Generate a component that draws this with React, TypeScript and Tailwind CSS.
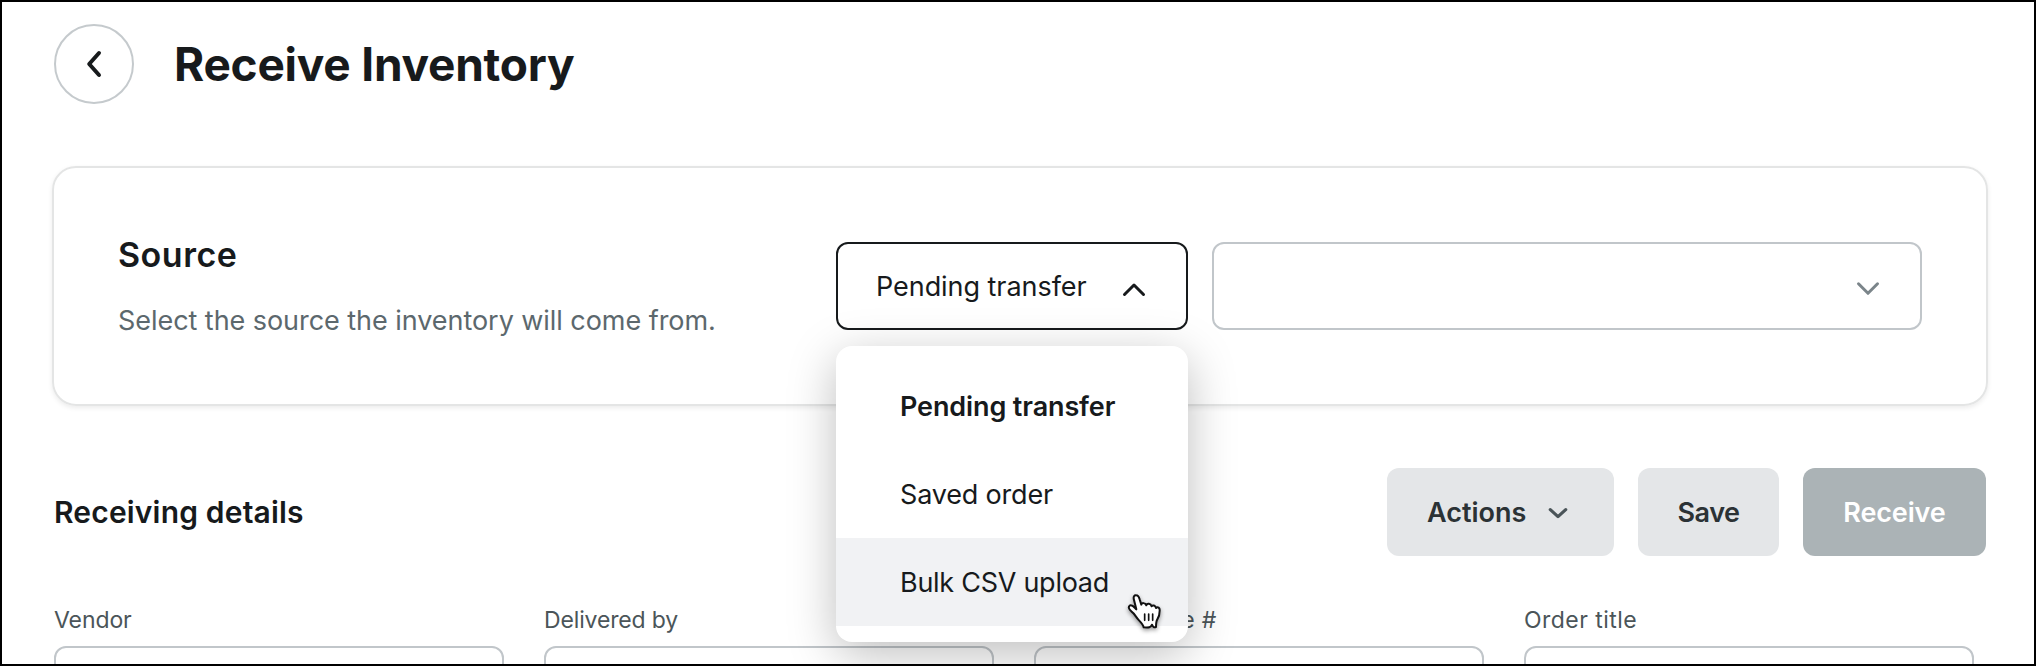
import { useState } from "react"

const sources = [
  { id: "pending", label: "Pending transfer", spacing: "tracking-[-0.12px]" },
  { id: "saved", label: "Saved order", spacing: "tracking-[-0.18px]" },
  { id: "csv", label: "Bulk CSV upload", spacing: "tracking-[-0.27px]" },
]

const fields = [
  { label: "Vendor", spacing: "tracking-[-0.1px]" },
  { label: "Delivered by", spacing: "tracking-[-0.15px]" },
  { label: "Invoice #", spacing: "pl-[81px] tracking-[0.3px]" },
  { label: "Order title", spacing: "tracking-[0.45px]" },
]

function HandCursor() {
  return (
    <svg
      className="pointer-events-none absolute left-[284px] top-[239px] h-[50px] w-[50px] overflow-visible drop-shadow-[0_2px_2px_rgba(0,0,0,0.4)]"
      viewBox="0 0 150 150"
      fill="none"
      strokeLinecap="round"
      strokeLinejoin="round"
    >
      <path
        d="M49 73 42 45C39 34 43 30 49 31C54 31 57 36 59 43L64 59C64 53 76 52 79 61C81 54 92 55 95 64C98 59 106 61 108 69C113 64 120 68 119 77C119 90 117 96 112 103C108 109 108 115 108 126C103 128 99 127 96 119C91 128 88 128 71 127C70 119 64 113 57 106C48 97 44 86 34 79C27 73 24 66 29 62C36 57 43 67 49 73Z"
        fill="#fff"
        stroke="#111"
        strokeWidth="6"
      />
      <path d="M74 87v19M86 87v19M98 87v19" stroke="#111" strokeWidth="5" />
    </svg>
  )
}

export default function App() {
  const [selected, setSelected] = useState("pending")
  const current = sources.find((s) => s.id === selected)

  return (
    <div className="h-[666px] w-[2036px] overflow-hidden border-2 border-black bg-white font-[Inter,sans-serif] text-[#171a1c]">
      {/* Header */}
      <header className="ml-[52px] mt-[22px] flex items-center">
        <button className="flex h-20 w-20 items-center justify-center rounded-full border-2 border-[#c5cacd]">
          <svg className="h-8 w-8" viewBox="0 0 32 32" fill="none" stroke="currentColor" strokeWidth="4" strokeLinecap="round" strokeLinejoin="round">
            <path d="M21 5 11.2 16 21 27" />
          </svg>
        </button>
        <h1 className="ml-10 text-[46px] font-bold tracking-[-0.23px]">Receive Inventory</h1>
      </header>

      {/* Source */}
      <section className="ml-[50px] mt-[62px] flex h-60 w-[1936px] items-center justify-between rounded-3xl border-2 border-[#e4e5e5] px-16 shadow-[0_2px_5px_rgba(0,0,0,0.08)]">
        <div className="pt-0.5">
          <h2 className="text-[34px] font-semibold leading-10 tracking-[0.5px]">Source</h2>
          <p className="mt-7 text-[27px] leading-9 tracking-[-0.05px] text-[#5c686d]">
            Select the source the inventory will come from.
          </p>
        </div>

        <div className="flex gap-6">
          <div className="relative">
            <button className="flex h-[88px] w-[352px] items-center justify-between rounded-xl border-2 border-[#171a1c] pl-[38px] pr-10 text-[27px] tracking-[-0.05px]">
              <span className="pt-0.5">{current?.label}</span>
              <svg className="h-6 w-6" viewBox="0 0 24 24" fill="none" stroke="currentColor" strokeWidth="3" strokeLinecap="round" strokeLinejoin="round">
                <path d="M2.5 20.5 12 11l9.5 9.5" />
              </svg>
            </button>

            <div className="absolute left-0 top-[104px] z-10 w-[352px] rounded-2xl bg-white py-4 shadow-[0_12px_48px_rgba(0,0,0,0.26)]">
              {sources.map((s) => (
                <button
                  key={s.id}
                  onClick={() => setSelected(s.id)}
                  className={`flex h-[88px] w-full items-center pl-16 pt-0.5 text-[27px] ${s.spacing} ${
                    s.id === selected ? "font-semibold" : ""
                  } ${s.id === "csv" ? "bg-[#f1f2f4]" : ""}`}
                >
                  {s.label}
                </button>
              ))}
              <HandCursor />
            </div>
          </div>

          <button className="flex h-[88px] w-[710px] items-center justify-end rounded-xl border-2 border-[#c1c6ca] pr-10 text-[#7b858a]">
            <svg className="h-6 w-6" viewBox="0 0 24 24" fill="none" stroke="currentColor" strokeWidth="3" strokeLinecap="round" strokeLinejoin="round">
              <path d="M2.5 9.8 12 19.3l9.5-9.5" />
            </svg>
          </button>
        </div>
      </section>

      {/* Details */}
      <div className="ml-[52px] mr-12 mt-[62px] flex h-[88px] items-center justify-between">
        <h2 className="text-[30px] font-semibold tracking-[0.17px]">Receiving details</h2>
        <div className="flex gap-6 text-[27px] font-semibold text-[#2b3235]">
          <button className="flex h-[88px] w-[227px] items-center rounded-xl bg-[#e4e6e8] pl-10">
            <span className="pt-0.5">Actions</span>
            <svg className="ml-[22px] h-5 w-5" viewBox="0 0 20 20" fill="none" stroke="#4a5458" strokeWidth="3.2" strokeLinecap="round" strokeLinejoin="round">
              <path d="M2.3 7.6 10 14.6l7.7-7" />
            </svg>
          </button>
          <button className="h-[88px] w-[141px] rounded-xl bg-[#e4e6e8] pt-0.5 tracking-[-0.49px]">Save</button>
          <button className="h-[88px] w-[183px] rounded-xl bg-[#abb3b6] pt-0.5 tracking-[-0.14px] text-white">Receive</button>
        </div>
      </div>

      <div className="ml-[52px] mt-[49px] flex gap-10">
        {fields.map((f) => (
          <label key={f.label} className="w-[450px] shrink-0">
            <span className={`block text-[23px] leading-[30px] text-[#4b5559] ${f.spacing}`}>{f.label}</span>
            <input className="mt-[11px] block h-[88px] w-full rounded-xl border-2 border-[#c1c6ca]" />
          </label>
        ))}
      </div>
    </div>
  )
}
